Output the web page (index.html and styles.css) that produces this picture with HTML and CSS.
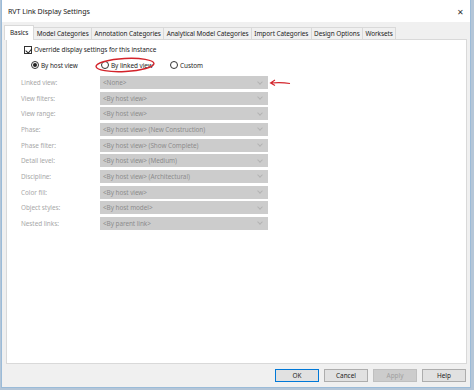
FILE: index.html
```html
<!DOCTYPE html>
<html lang="en">

<head>
    <meta charset="UTF-8">
    <title>RVT Link Display Settings</title>
    <link rel="stylesheet" href="styles.css">
</head>

<body>
    <div class="window">
        <div class="titlebar">
            <span class="title">RVT Link Display Settings</span>
            <span class="close">&#x2715;</span>
        </div>
        <div class="frame">
            <div class="tabs">
                <div class="tab active">Basics</div>
                <div class="tab">Model Categories</div>
                <div class="tab">Annotation Categories</div>
                <div class="tab">Analytical Model Categories</div>
                <div class="tab">Import Categories</div>
                <div class="tab">Design Options</div>
                <div class="tab">Worksets</div>
            </div>
            <div class="panel">
                <div class="override">
                    <span class="checkbox checked"></span>
                    <span>Override display settings for this instance</span>
                </div>
                <div class="modes">
                    <div class="mode"><span class="radio checked"></span>By host view</div>
                    <div class="mode mark"><span class="radio"></span>By linked view
                        <svg class="ellipse" width="64" height="18" viewBox="0 0 64 18">
                            <ellipse cx="32" cy="9" rx="29" ry="6.5" transform="rotate(-3 32 9)" fill="none" stroke="#d3232a" stroke-width="1.4"/>
                        </svg>
                    </div>
                    <div class="mode"><span class="radio"></span>Custom</div>
                </div>
                <div class="form">
                    <label>Linked view:</label>
                    <div class="combo">&lt;None&gt;
                        <svg class="arrow" width="22" height="8" viewBox="0 0 22 8">
                            <path d="M21 4.5 Q12 3 2 4 M6 1 L1.5 4 L6 6.5" fill="none" stroke="#d3232a" stroke-width="1.1"/>
                        </svg>
                    </div>
                    <label>View filters:</label>
                    <div class="combo">&lt;By host view&gt;</div>
                    <label>View range:</label>
                    <div class="combo">&lt;By host view&gt;</div>
                    <label>Phase:</label>
                    <div class="combo">&lt;By host view&gt; (New Construction)</div>
                    <label>Phase filter:</label>
                    <div class="combo">&lt;By host view&gt; (Show Complete)</div>
                    <label>Detail level:</label>
                    <div class="combo">&lt;By host view&gt; (Medium)</div>
                    <label>Discipline:</label>
                    <div class="combo">&lt;By host view&gt; (Architectural)</div>
                    <label>Color fill:</label>
                    <div class="combo">&lt;By host view&gt;</div>
                    <label>Object styles:</label>
                    <div class="combo">&lt;By host model&gt;</div>
                    <label>Nested links:</label>
                    <div class="combo">&lt;By parent link&gt;</div>
                </div>
            </div>
            <div class="footer">
                <button class="default">OK</button>
                <button>Cancel</button>
                <button disabled>Apply</button>
                <button>Help</button>
            </div>
        </div>
    </div>
</body>

</html>
```

FILE: styles.css
```css
* {
    box-sizing: border-box;
}

body {
    margin: 0;
    height: 390px;
    background: #b4c6d8;
    font-family: "Noto Sans", "Open Sans", sans-serif;
    font-size: 6.4px;
    letter-spacing: -0.05px;
    color: #1e1e1e;
    overflow: hidden;
}

.window {
    width: 470px;
    height: 388px;
    margin-left: 1px;
    border: 1px solid #9bbbd8;
    border-top: none;
    background: #f0f0f0;
    display: flex;
    flex-direction: column;
}

.titlebar {
    height: 22px;
    background: #fff;
    display: flex;
    align-items: center;
    justify-content: space-between;
    padding: 0 6px 0 6px;
}

.title {
    font-size: 7.1px;
    color: #222;
}

.close {
    font-size: 8px;
    color: #333;
}

.frame {
    flex: 1;
    padding: 3px 3px 0 4px;
    display: flex;
    flex-direction: column;
}

.tabs {
    display: flex;
    height: 14px;
    align-items: flex-end;
    margin-left: -2px;
}

.tab {
    height: 12px;
    line-height: 11px;
    padding: 0 2.4px;
    border: 1px solid #d9d9d9;
    border-bottom: none;
    border-left: none;
    background: #f0f0f0;
    color: #222;
    white-space: nowrap;
}

.tab.active {
    height: 15px;
    line-height: 13px;
    background: #fff;
    border-left: 1px solid #d9d9d9;
    margin-bottom: -1px;
    padding: 0 5px;
    position: relative;
    z-index: 1;
}

.panel {
    height: 325px;
    background: #fff;
    border: 1px solid #d9d9d9;
    padding: 3px 0 0 14px;
    position: relative;
}

.override {
    height: 13px;
    display: flex;
    align-items: center;
    gap: 2px;
    padding-left: 3px;
}

.checkbox {
    width: 8px;
    height: 8px;
    border: 1px solid #333;
    position: relative;
}

.checkbox.checked::after {
    content: "";
    position: absolute;
    left: 1.5px;
    top: 0;
    width: 2.5px;
    height: 4.5px;
    border: solid #222;
    border-width: 0 1px 1px 0;
    transform: rotate(40deg);
}

.modes {
    height: 13px;
    margin-top: 2.5px;
    padding-left: 10px;
    display: flex;
    align-items: center;
}

.mode {
    display: flex;
    align-items: center;
    gap: 2px;
    position: relative;
}

.mode:nth-child(1) {
    width: 70px;
}

.mode:nth-child(2) {
    width: 69px;
}

.ellipse {
    position: absolute;
    left: -8px;
    top: -5px;
}

.radio {
    width: 8px;
    height: 8px;
    border: 1px solid #333;
    border-radius: 50%;
    position: relative;
}

.radio.checked::after {
    content: "";
    position: absolute;
    left: 1px;
    top: 1px;
    width: 4px;
    height: 4px;
    border-radius: 50%;
    background: #222;
}

.form {
    display: grid;
    grid-template-columns: 79px 168px;
    grid-auto-rows: 13px;
    row-gap: 2.67px;
    margin-top: 4.5px;
}

.form label {
    color: #a8a8a8;
    line-height: 13px;
}

.combo {
    background: #cccccc;
    color: #8c8c8c;
    line-height: 13px;
    padding-left: 3px;
    position: relative;
}

.combo::after {
    content: "";
    position: absolute;
    right: 6px;
    top: 3.5px;
    width: 3px;
    height: 3px;
    border: solid #b4b4b4;
    border-width: 0 1px 1px 0;
    transform: rotate(45deg);
}

.arrow {
    position: absolute;
    left: 169px;
    top: 3px;
}

.footer {
    display: flex;
    justify-content: flex-end;
    gap: 5px;
    padding-top: 5px;
    padding-right: 1px;
}

button {
    width: 44px;
    height: 13px;
    padding: 0;
    font-family: inherit;
    font-size: 6.4px;
    color: #222;
    background: #e1e1e1;
    border: 1px solid #adadad;
}

button.default {
    border: 1px solid #0078d7;
}

button:disabled {
    background: #cccccc;
    border-color: #bfbfbf;
    color: #a0a0a0;
}
```
